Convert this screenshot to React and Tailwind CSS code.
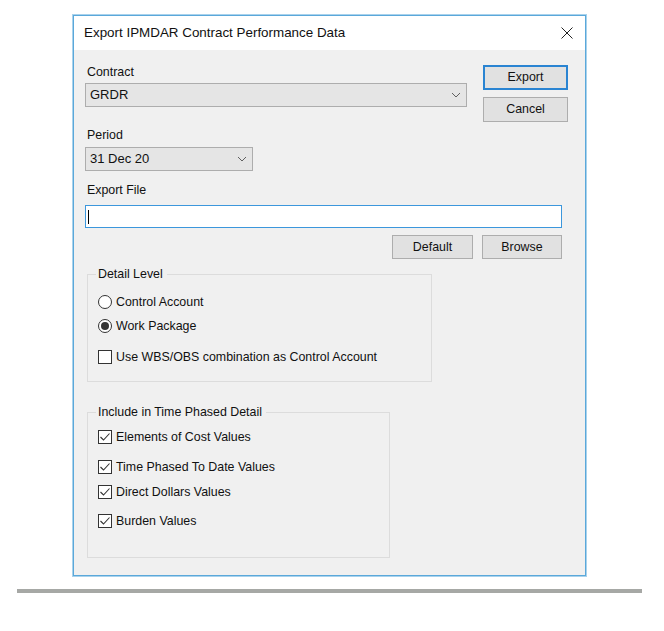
import React from "react";

const Chevron = () => (
  <svg width="10" height="6" viewBox="0 0 10 6" className="text-[#606060]">
    <path d="M1 1 L5 5 L9 1" fill="none" stroke="currentColor" strokeWidth="1" />
  </svg>
);

const Combo = ({ value, className }) => (
  <div
    className={
      "flex h-[24px] items-center justify-between border border-[#adadad] bg-[#e5e5e5] pl-[4px] pr-[5px] " +
      className
    }
  >
    <span className="text-[13px]">{value}</span>
    <Chevron />
  </div>
);

const Button = ({ label, primary, className }) => (
  <div
    className={
      "flex h-[24px] items-center justify-center bg-[#e1e1e1] " +
      (primary ? "border-2 border-[#2a84d2] " : "border border-[#adadad] ") +
      className
    }
  >
    {label}
  </div>
);

const Radio = ({ label, checked }) => (
  <div className="flex h-[16px] items-center">
    <span className="ml-[10px] flex h-[14px] w-[14px] items-center justify-center rounded-full border border-[#333] bg-white">
      {checked && <span className="h-[8px] w-[8px] rounded-full bg-[#333]" />}
    </span>
    <span className="ml-[4px]">{label}</span>
  </div>
);

const Check = ({ label, checked }) => (
  <div className="flex h-[16px] items-center">
    <span className="ml-[10px] flex h-[14px] w-[14px] items-center justify-center border border-[#333] bg-white">
      {checked && (
        <svg width="12" height="12" viewBox="0 0 12 12">
          <path d="M1.5 6 L4.5 9 L10.5 2.5" fill="none" stroke="#333" strokeWidth="1.1" />
        </svg>
      )}
    </span>
    <span className="ml-[4px]">{label}</span>
  </div>
);

export default function App() {
  return (
    <div className="min-h-[631px] w-[664px] bg-white pt-[15px] font-['Liberation_Sans',Arial,sans-serif] text-[12.4px] text-[#111]">
      <div className="ml-[73px] flex h-[561px] w-[513px] flex-col border border-[#5aa8da] bg-[#f0f0f0] shadow-[0_0_0_1px_#a9d2ec]">
        <div className="flex h-[34px] shrink-0 items-center justify-between bg-white pl-[10px] pr-[12px]">
          <span className="text-[13.4px]">Export IPMDAR Contract Performance Data</span>
          <svg width="12" height="12" viewBox="0 0 12 12">
            <path d="M0.5 0.5 L11.5 11.5 M11.5 0.5 L0.5 11.5" stroke="#222" strokeWidth="1" />
          </svg>
        </div>

        <div className="pl-[11px]">
          <div className="flex">
            <div className="w-[382px] pt-[15px]">
              <div className="h-[15px] pl-[2px] leading-[15px]">Contract</div>
              <Combo value="GRDR" className="mt-[3px]" />
            </div>
            <div className="ml-[16px] flex w-[85px] flex-col pt-[15px]">
              <Button label="Export" primary className="h-[25px]" />
              <Button label="Cancel" className="mt-[7px] h-[25px]" />
            </div>
          </div>

          <div className="mt-[6px] h-[15px] pl-[2px] leading-[15px]">Period</div>
          <Combo value="31 Dec 20" className="mt-[4px] w-[168px]" />

          <div className="mt-[12px] h-[15px] pl-[2px] leading-[15px]">Export File</div>
          <div className="mt-[7px] flex h-[23px] w-[477px] items-center border border-[#3c97dc] bg-white pl-[2px]">
            <span className="h-[14px] w-px bg-black" />
          </div>
          <div className="mt-[7px] flex w-[477px] justify-end gap-[9px]">
            <Button label="Default" className="w-[81px]" />
            <Button label="Browse" className="w-[80px]" />
          </div>

          <fieldset className="ml-[2px] mt-[8px] w-[345px] border border-[#dcdcdc] pb-[16px]">
            <legend className="ml-[8px] px-[2px] pr-[4px] leading-[15px]">Detail Level</legend>
            <div className="pt-[12px]">
              <Radio label="Control Account" />
              <div className="mt-[8px]">
                <Radio label="Work Package" checked />
              </div>
              <div className="mt-[15px]">
                <Check label="Use WBS/OBS combination as Control Account" />
              </div>
            </div>
          </fieldset>

          <fieldset className="ml-[2px] mt-[23px] w-[303px] border border-[#dcdcdc] pb-[28px]">
            <legend className="ml-[8px] px-[2px] pr-[4px] leading-[15px]">Include in Time Phased Detail</legend>
            <div className="pt-[9px]">
              <Check label="Elements of Cost Values" checked />
              <div className="mt-[14px]">
                <Check label="Time Phased To Date Values" checked />
              </div>
              <div className="mt-[9px]">
                <Check label="Direct Dollars Values" checked />
              </div>
              <div className="mt-[13px]">
                <Check label="Burden Values" checked />
              </div>
            </div>
          </fieldset>
        </div>
      </div>
      <div className="ml-[17px] mt-[13px] h-[4px] w-[625px] bg-[#a6a8a5]" />
    </div>
  );
}
